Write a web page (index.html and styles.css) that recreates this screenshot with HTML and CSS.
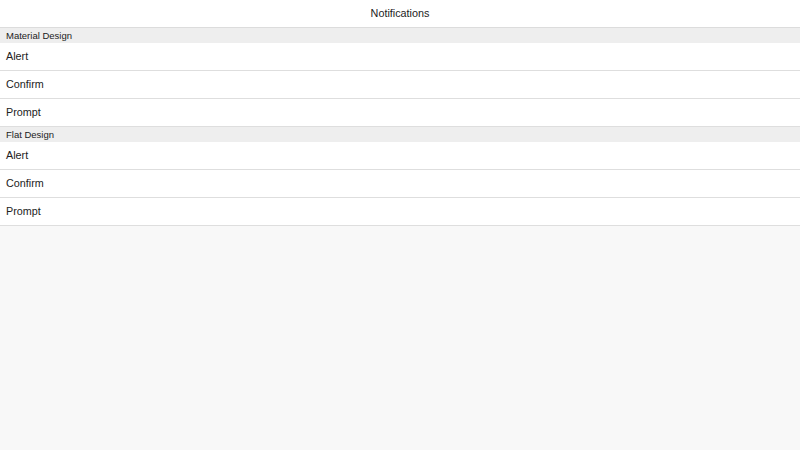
FILE: index.html
```html
<!DOCTYPE html>
<html>
<head>
<meta charset="utf-8">
<link rel="stylesheet" href="styles.css">
</head>
<body>
<div class="page">
  <header class="bar">Notifications</header>
  <div class="list">
    <div class="divider">Material Design</div>
    <div class="item">Alert</div>
    <div class="item">Confirm</div>
    <div class="item">Prompt</div>
    <div class="divider">Flat Design</div>
    <div class="item">Alert</div>
    <div class="item">Confirm</div>
    <div class="item">Prompt</div>
  </div>
</div>
</body>
</html>
```

FILE: styles.css
```css
html, body {
  margin: 0;
  padding: 0;
  height: 100%;
}
body {
  background: #f8f8f8;
  font-family: "Liberation Sans", Arial, sans-serif;
  color: #222;
}
.page {
  display: flex;
  flex-direction: column;
}
.bar {
  height: 25px;
  padding-bottom: 2px;
  background: #fff;
  border-bottom: 1px solid #dcdcdc;
  display: flex;
  align-items: center;
  justify-content: center;
  font-size: 10.8px;
  color: #222;
}
.list {
  display: flex;
  flex-direction: column;
}
.divider {
  height: 14px;
  padding-bottom: 1px;
  background: #eeeeee;
  display: flex;
  align-items: center;
  padding-left: 6px;
  font-size: 9.5px;
  color: #222;
}
.item {
  height: 25px;
  padding-bottom: 2px;
  background: #fff;
  border-bottom: 1px solid #dedede;
  display: flex;
  align-items: center;
  padding-left: 6px;
  font-size: 10.8px;
  color: #222;
}
```
